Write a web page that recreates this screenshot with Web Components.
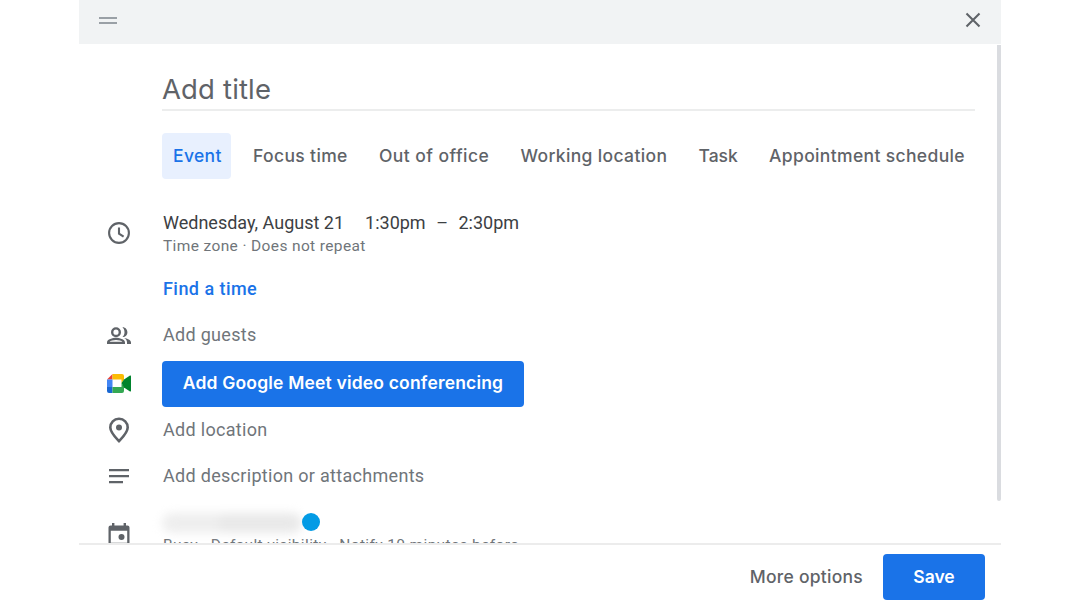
<!DOCTYPE html>
<html><head><meta charset="utf-8"><title>Event</title>
<style>
html,body{margin:0;padding:0;background:#fff;height:608px;overflow:hidden}
body{font-family:Roboto,"Liberation Sans",sans-serif;color:#3c4043}
</style></head><body>
<event-dialog>
  <dialog-header slot="header"></dialog-header>
  <title-field>Add title</title-field>
  <type-tabs>
    <type-tab active>Event</type-tab><type-tab>Focus time</type-tab><type-tab style="letter-spacing:.45px">Out of office</type-tab><type-tab>Working location</type-tab><type-tab style="letter-spacing:0">Task</type-tab><type-tab>Appointment schedule</type-tab>
  </type-tabs>
  <form-row icon="clock" h="66" style="margin-top:21px">
    <div style="font-size:18px;line-height:23px;color:#3c4043;white-space:pre;margin:2px 0 1px;padding-left:1px">Wednesday, August 21<span style="display:inline-block;width:21px"></span>1:30pm<span style="display:inline-block;width:10.5px"></span>–<span style="display:inline-block;width:10.5px"></span>2:30pm</div>
    <div style="font-size:15.5px;line-height:23px;color:#70757a;letter-spacing:.37px;padding-left:1px">Time zone · Does not repeat</div>
  </form-row>
  <form-row h="46"><div style="font:500 18px/46px Roboto,sans-serif;color:#1a73e8;letter-spacing:.45px;padding-left:1px">Find a time</div></form-row>
  <form-row icon="people" h="46"><placeholder-text>Add guests</placeholder-text></form-row>
  <form-row icon="meet" h="46" style="margin-top:3px"><meet-button>Add Google Meet video conferencing</meet-button></form-row>
  <form-row icon="pin" h="46"><placeholder-text>Add location</placeholder-text></form-row>
  <form-row icon="notes" h="46"><placeholder-text>Add description or attachments</placeholder-text></form-row>
  <form-row icon="calendar" h="70"><calendar-line></calendar-line></form-row>
  <dialog-footer slot="footer"></dialog-footer>
</event-dialog>
<script>
const SANS='Inter,"Open Sans",Roboto,sans-serif';
function def(name,html){customElements.define(name,class extends HTMLElement{constructor(){super();this.attachShadow({mode:'open'}).innerHTML=typeof html==='function'?html(this):html;}})}
const ICONS={
clock:'<circle cx="12" cy="12" r="9.900" fill="none" stroke="#5f6368" stroke-width="2.100"/><path d="M12 6.600V12.600L16.600 15.600" fill="none" stroke="#5f6368" stroke-width="2.100"/>',
people:'<path fill="#5f6368" fill-rule="evenodd" d="M9 14.200a5 5 0 1 0 0-10 5 5 0 0 0 0 10Zm0-7.600a2.600 2.600 0 1 1 0 5.200 2.600 2.600 0 0 1 0-5.200ZM9 14.800c-3.300 0-9 1.500-9 4.600V21H18V19.400c0-3.100-5.700-4.600-9-4.600ZM2.600 18.800c.6-.9 4-1.700 6.400-1.700s5.800.8 6.400 1.700H2.600Z"/><path fill="#5f6368" d="M15.400 4.300c1.300 1.100 2.100 2.900 2.100 4.900s-.8 3.800-2.100 4.900c2.800.2 5-2.100 5-4.900s-2.200-5.100-5-4.900ZM17 15c1.900 1 3 2.500 3 4.400V21h4V19.400c0-2.500-3.700-4-7-4.400Z"/>',
meet:'<path fill="#ea4335" d="M0 7.500 5.500 2V7.500H0Z"/><path fill="#4285f4" d="M0 7.500H5.500V15H0V7.500Z"/><path fill="#1967d2" d="M0 15H5.500V21H2a2 2 0 0 1-2-2V15Z"/><path fill="#fbbc04" d="M5.500 2H15a2 2 0 0 1 2 2V7.500L14.500 11V7.500H5.500V2Z"/><path fill="#34a853" d="M5.500 15H14.500V11L17 14.500V19a2 2 0 0 1-2 2H5.500V15Z"/><path fill="#00832d" d="M14.500 11 17 7.500 23 3.600A.7.7 0 0 1 24 4.200V18.800A.7.7 0 0 1 23 19.400L17 15.500 14.500 11Z"/>',
pin:'<path fill="none" stroke="#5f6368" stroke-width="2.600" d="M12 .8C7 .8 3.300 4.600 3.300 9.500 3.300 14.400 8.500 19.500 12 23.200 15.500 19.500 20.700 14.400 20.700 9.500 20.700 4.600 17 .8 12 .8Z"/><circle cx="12" cy="9.400" r="3" fill="#5f6368"/>',
notes:'<path fill="#5f6368" d="M2 5h20v2.200H2zM2 11h20v2.200H2zM2 17h14v2.200H2z"/>',
calendar:'<path fill="#5f6368" fill-rule="evenodd" d="M5 1h2.400v2.400h9.200V1H19v2.400h1.500a2 2 0 0 1 2 2v15.600a2 2 0 0 1-2 2h-17a2 2 0 0 1-2-2V5.400a2 2 0 0 1 2-2H5V1ZM3.800 8.800v11.900h16.400V8.800H3.800Z"/><circle cx="14.500" cy="15" r="3" fill="#5f6368"/>'
};
def('event-dialog',`<style>
:host{display:flex;flex-direction:column;width:922px;height:608px;margin-left:79px;position:relative}
.body{height:499px;overflow:hidden;position:relative;flex:none}
.bar{position:absolute;right:0;top:1px;width:4px;height:456px;background:#dadce0;border-radius:0 0 2px 2px}
</style><slot name="header"></slot><div class="body"><slot></slot><div class="bar"></div></div><slot name="footer"></slot>`);
def('dialog-header',`<style>
:host{display:flex;align-items:center;justify-content:space-between;height:44px;background:#f1f3f4;padding:0 18px 4px 20px;box-sizing:border-box;flex:none}
.h{width:18px;height:7px;border-top:2px solid #9aa0a6;border-bottom:2px solid #9aa0a6;box-sizing:border-box}
svg{display:block}
</style><div class="h"></div><svg width="20" height="20" viewBox="0 0 20 20"><path d="M3.500 3.500 16.500 16.500M16.500 3.500 3.500 16.500" stroke="#5f6368" stroke-width="2.100" fill="none"/></svg>`);
def('title-field',`<style>
:host{display:block;margin:25px 26px 0 83px;height:42px;border-bottom:2px solid #eceded;font:400 27.500px/40px ${SANS};color:#5f6368;letter-spacing:.15px;box-sizing:border-box}
</style><slot></slot>`);
def('type-tabs',`<style>:host{display:flex;margin:22px 0 0 83px}</style><slot></slot>`);
def('type-tab',`<style>
:host{display:block;height:46px;padding:0 9.500px 0 11px;margin-right:10.750px;border-radius:4px;font:500 17.500px/45px ${SANS};color:#5f6368;white-space:nowrap;letter-spacing:.35px}
:host([active]){background:#e8f0fe;color:#1a73e8}
</style><slot></slot>`);
def('form-row',(el)=>{const i=el.getAttribute('icon');const h=el.getAttribute('h');return `<style>
:host{display:grid;grid-template-columns:83px 1fr;height:${h}px;align-items:center}
.i{display:flex;justify-content:center;width:80px}
svg{display:block;overflow:visible}
</style><div class="i">${i?`<svg width="24" height="24" viewBox="0 0 24 24">${ICONS[i]}</svg>`:''}</div><div><slot></slot></div>`});
def('placeholder-text',`<style>:host{display:block;padding-left:1px;font:400 18px/46px Roboto,sans-serif;color:#70757a;letter-spacing:.3px}</style><slot></slot>`);
def('meet-button',`<style>:host{display:block;height:46px;width:362px;box-sizing:border-box;background:#1a73e8;color:#fff;border-radius:4px;text-align:center;font:600 17.500px/44px ${SANS};white-space:nowrap;letter-spacing:.18px}</style><slot></slot>`);
def('calendar-line',`<style>
:host{display:block;height:70px;box-sizing:border-box;padding-top:13px}
.r{display:flex;align-items:center;height:20px}
.w{display:flex;width:140px;height:20px;filter:blur(5px);margin-top:1px}
.a{width:76px;height:20px;border-radius:10px;background:#eeeeee}
.b{width:84px;height:20px;border-radius:10px;background:#e9e9e9;margin-left:-20px}
.d{width:18px;height:18px;border-radius:50%;background:#039be5;position:relative}
.t{padding-left:1px;font:400 15.500px/20px Roboto,sans-serif;color:#70757a;letter-spacing:.37px;margin-top:3px;white-space:nowrap}
</style><div class="r"><div class="w"><div class="a"></div><div class="b"></div></div><div class="d"></div></div><div class="t">Busy · Default visibility · Notify 10 minutes before</div>`);
def('dialog-footer',`<style>
:host{display:flex;justify-content:flex-end;align-items:center;border-top:2px solid #ececec;height:65px;box-sizing:border-box;padding:0 16px 0 0;gap:20px;flex:none}
.m{font:500 17.500px/46px ${SANS};color:#5f6368;letter-spacing:.25px}
.s{width:102px;height:46px;background:#1a73e8;color:#fff;border-radius:4px;text-align:center;font:600 17.500px/45px ${SANS}}
</style><div class="m">More options</div><div class="s">Save</div>`);
</script>
</body></html>
